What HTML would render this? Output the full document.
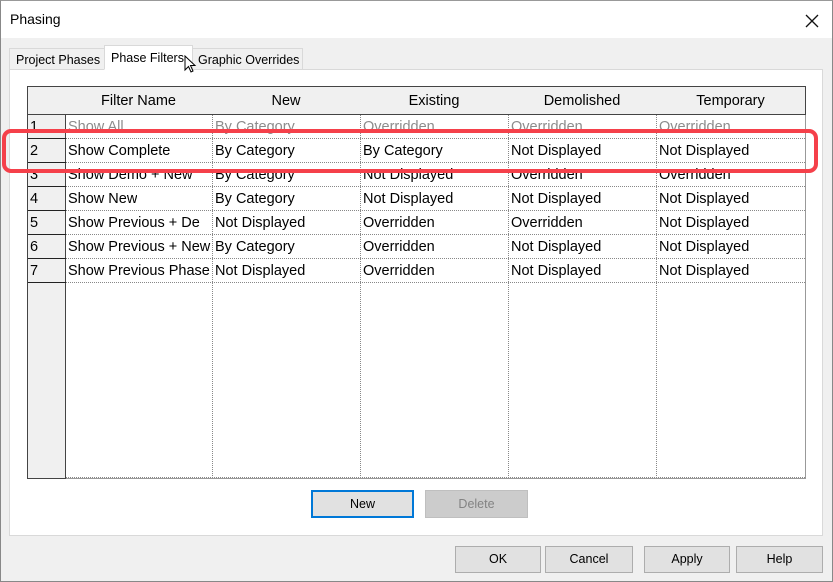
<!DOCTYPE html>
<html><head><style>
*{margin:0;padding:0;box-sizing:border-box}
body{width:833px;height:582px;overflow:hidden;background:#f0f0f0;font-family:"Liberation Sans",sans-serif;position:relative}
.win{position:absolute;left:0;top:0;width:833px;height:582px;border:1px solid #888;border-top:1px solid #999}
.title{position:absolute;left:1px;top:1px;width:831px;height:37px;background:#fff}
.title span{position:absolute;left:9px;top:10px;font-size:14px;color:#000}
.x{position:absolute;left:803px;top:12px}
.tab{position:absolute;font-size:12.5px;color:#000;border:1px solid #d9d9d9;border-bottom:none;background:#f0f0f0;padding-left:6px;line-height:22px}
.panel{position:absolute;left:9px;top:69px;width:814px;height:467px;background:#fff;border:1px solid #d9d9d9}
.abs{position:absolute}
.hc{position:absolute;top:86px;height:29px;background:#f0f0f0;border:1px solid #444;border-left:none;text-align:center;font-size:14.5px;line-height:29px;color:#000}
.cell{position:absolute;font-size:14.5px;color:#000;white-space:nowrap;overflow:hidden;line-height:24px}
.btn{position:absolute;background:#e1e1e1;border:1px solid #adadad;font-size:12.5px;text-align:center;color:#000}
</style></head><body>
<div class="win"></div>
<div class="title"><span>Phasing</span>
<svg class="x" width="16" height="16"><path d="M2 2L14 14M14 2L2 14" stroke="#111" stroke-width="1.3"/></svg></div>
<div class="panel"></div>
<div class="tab" style="left:9px;top:48px;width:96px;height:21px">Project Phases</div>
<div class="tab" style="left:191px;top:48px;width:112px;height:21px">Graphic Overrides</div>
<div class="tab" style="left:104px;top:45px;width:89px;height:25px;background:#fff;border-bottom:1px solid #fff;line-height:24px">Phase Filters</div>
<svg class="abs" style="left:184px;top:55px" width="14" height="20"><path d="M1 1L1 15L4.5 11.5L7 17L9 16L6.5 10.5L11 10.5Z" fill="#fff" stroke="#000" stroke-width="1"/></svg>
<div class="abs" style="left:27px;top:86px;width:779px;height:393px;background:#fff;border:1px solid #999;border-top:1px solid #444;border-left:1px solid #444"></div>
<div class="abs" style="left:27px;top:86px;width:39px;height:393px;background:#f0f0f0;border:1px solid #444"></div>
<div class="hc" style="left:27px;width:39px;border-left:1px solid #444"></div>
<div class="hc" style="left:65px;width:148px">Filter Name</div>
<div class="hc" style="left:212px;width:149px">New</div>
<div class="hc" style="left:360px;width:149px">Existing</div>
<div class="hc" style="left:508px;width:149px">Demolished</div>
<div class="hc" style="left:656px;width:150px">Temporary</div>
<svg class="abs" style="left:0;top:0" width="833" height="582">
<g stroke="#888" stroke-width="1" stroke-dasharray="1,1">
<line x1="212.5" y1="115" x2="212.5" y2="478"/><line x1="360.5" y1="115" x2="360.5" y2="478"/><line x1="508.5" y1="115" x2="508.5" y2="478"/><line x1="656.5" y1="115" x2="656.5" y2="478"/>
<line x1="66" y1="477.5" x2="805" y2="477.5"/>
<line x1="66" y1="138.5" x2="805" y2="138.5"/><line x1="66" y1="162.5" x2="805" y2="162.5"/><line x1="66" y1="186.5" x2="805" y2="186.5"/><line x1="66" y1="210.5" x2="805" y2="210.5"/><line x1="66" y1="234.5" x2="805" y2="234.5"/><line x1="66" y1="258.5" x2="805" y2="258.5"/><line x1="66" y1="282.5" x2="805" y2="282.5"/>
</g>
<g stroke="#222"><line x1="28" y1="138.5" x2="66" y2="138.5"/><line x1="28" y1="162.5" x2="66" y2="162.5"/><line x1="28" y1="186.5" x2="66" y2="186.5"/><line x1="28" y1="210.5" x2="66" y2="210.5"/><line x1="28" y1="234.5" x2="66" y2="234.5"/><line x1="28" y1="258.5" x2="66" y2="258.5"/><line x1="28" y1="282.5" x2="66" y2="282.5"/></g>
</svg>
<div class="cell" style="left:30px;top:115px">1</div>
<div class="cell" style="left:68px;top:115px;color:#8c8c8c">Show All</div>
<div class="cell" style="left:215px;top:115px;color:#8c8c8c">By Category</div>
<div class="cell" style="left:363px;top:115px;color:#8c8c8c">Overridden</div>
<div class="cell" style="left:511px;top:115px;color:#8c8c8c">Overridden</div>
<div class="cell" style="left:659px;top:115px;color:#8c8c8c">Overridden</div>

<div class="cell" style="left:30px;top:139px">2</div><div class="cell" style="left:68px;top:139px">Show Complete</div><div class="cell" style="left:215px;top:139px">By Category</div><div class="cell" style="left:363px;top:139px">By Category</div><div class="cell" style="left:511px;top:139px">Not Displayed</div><div class="cell" style="left:659px;top:139px">Not Displayed</div>
<div class="cell" style="left:30px;top:163px">3</div><div class="cell" style="left:68px;top:163px">Show Demo + New</div><div class="cell" style="left:215px;top:163px">By Category</div><div class="cell" style="left:363px;top:163px">Not Displayed</div><div class="cell" style="left:511px;top:163px">Overridden</div><div class="cell" style="left:659px;top:163px">Overridden</div>
<div class="cell" style="left:30px;top:187px">4</div><div class="cell" style="left:68px;top:187px">Show New</div><div class="cell" style="left:215px;top:187px">By Category</div><div class="cell" style="left:363px;top:187px">Not Displayed</div><div class="cell" style="left:511px;top:187px">Not Displayed</div><div class="cell" style="left:659px;top:187px">Not Displayed</div>
<div class="cell" style="left:30px;top:211px">5</div><div class="cell" style="left:68px;top:211px;width:133px">Show Previous + De</div><div class="cell" style="left:215px;top:211px">Not Displayed</div><div class="cell" style="left:363px;top:211px">Overridden</div><div class="cell" style="left:511px;top:211px">Overridden</div><div class="cell" style="left:659px;top:211px">Not Displayed</div>
<div class="cell" style="left:30px;top:235px">6</div><div class="cell" style="left:68px;top:235px;width:144px">Show Previous + New</div><div class="cell" style="left:215px;top:235px">By Category</div><div class="cell" style="left:363px;top:235px">Overridden</div><div class="cell" style="left:511px;top:235px">Not Displayed</div><div class="cell" style="left:659px;top:235px">Not Displayed</div>
<div class="cell" style="left:30px;top:259px">7</div><div class="cell" style="left:68px;top:259px">Show Previous Phase</div><div class="cell" style="left:215px;top:259px">Not Displayed</div><div class="cell" style="left:363px;top:259px">Overridden</div><div class="cell" style="left:511px;top:259px">Not Displayed</div><div class="cell" style="left:659px;top:259px">Not Displayed</div>

<div class="abs" style="left:2px;top:129px;width:816px;height:44px;border:4.5px solid #f5404a;border-radius:9px"></div>

<div class="btn" style="left:311px;top:490px;width:103px;height:28px;border:2px solid #0078d7;line-height:24px">New</div>
<div class="btn" style="left:425px;top:490px;width:103px;height:28px;background:#cccccc;border-color:#bfbfbf;color:#838383;line-height:26px">Delete</div>
<div class="btn" style="left:455px;top:546px;width:86px;height:27px;line-height:25px">OK</div>
<div class="btn" style="left:545px;top:546px;width:88px;height:27px;line-height:25px">Cancel</div>
<div class="btn" style="left:644px;top:546px;width:86px;height:27px;line-height:25px">Apply</div>
<div class="btn" style="left:736px;top:546px;width:87px;height:27px;line-height:25px">Help</div>
</body></html>
